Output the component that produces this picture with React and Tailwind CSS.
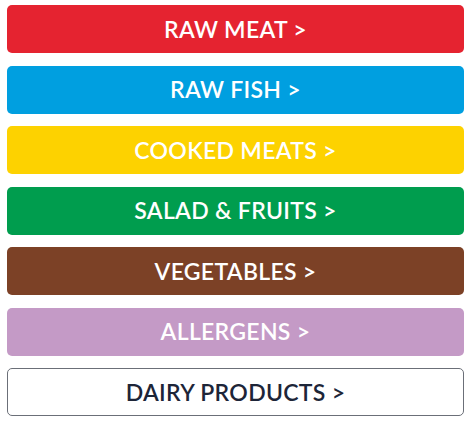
export default function App() {
  const items = [
    { label: "RAW MEAT >", cls: "bg-[#e52330] text-white" },
    { label: "RAW FISH >", cls: "bg-[#009fe0] text-white" },
    { label: "COOKED MEATS >", cls: "bg-[#fdd200] text-white" },
    { label: "SALAD & FRUITS >", cls: "bg-[#009d4e] text-white" },
    { label: "VEGETABLES >", cls: "bg-[#7c4126] text-white" },
    { label: "ALLERGENS >", cls: "bg-[#c49ac6] text-white" },
    { label: "DAIRY PRODUCTS >", cls: "bg-white text-[#1d2538] border border-[#6b6f78]" },
  ];
  return (
    <div className="w-[474px] h-[428px] bg-white pt-[5px] px-[7px] flex flex-col gap-[12.5px] font-['Lato',sans-serif]">
      {items.map((it) => (
        <div
          key={it.label}
          className={`h-[48px] w-[457px] shrink-0 rounded-[5px] flex items-center justify-center text-[23px] font-semibold tracking-[0.3px] ${it.cls}`}
        >
          {it.label}
        </div>
      ))}
    </div>
  );
}
